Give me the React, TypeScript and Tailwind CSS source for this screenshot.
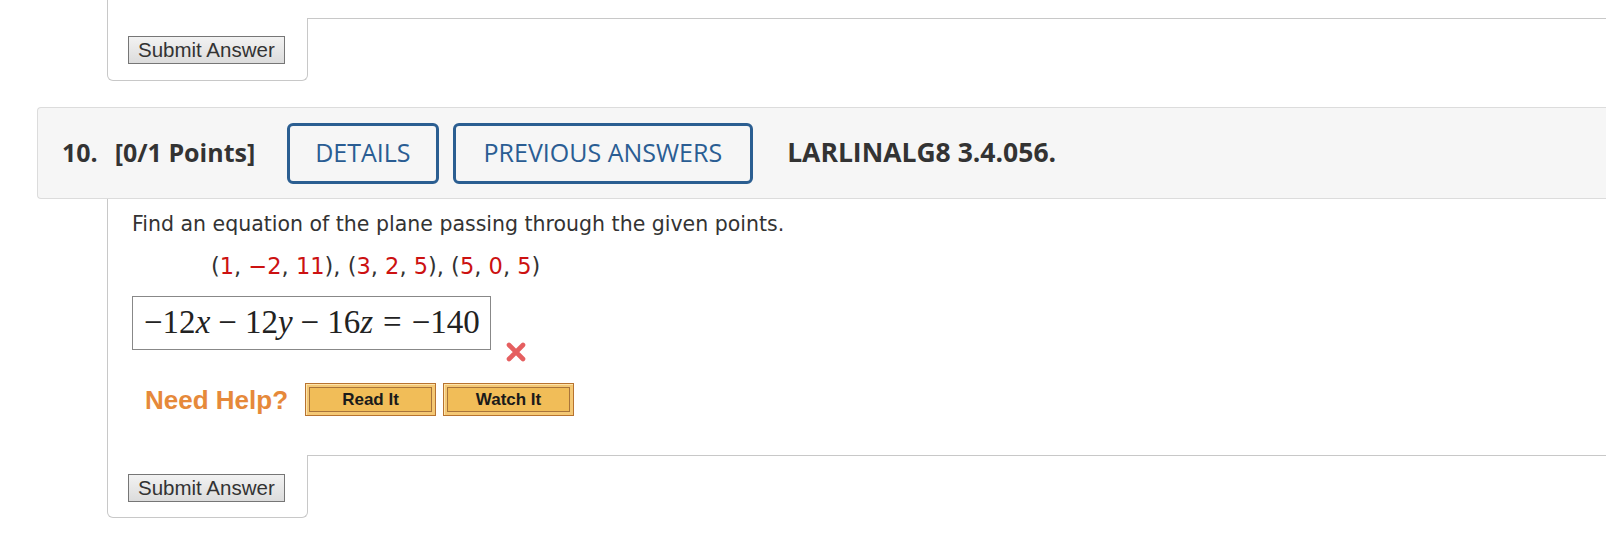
const sans = { fontFamily: '"Liberation Sans", Arial, sans-serif' };

function SubmitButton() {
  return (
    <button
      type="button"
      className="h-[28px] border border-[#767676] bg-[linear-gradient(#f2f2f2,#dcdcdc)] px-[9px] text-[20.5px] leading-[26px] text-[#333]"
      style={sans}
    >
      Submit Answer
    </button>
  );
}

function HelpButton({ label }: { label: string }) {
  return (
    <div className="h-[33px] w-[131px] border border-[#b8732f] bg-[#f4c875] p-[3px] shadow-[inset_1px_1px_0_#fde3ab]">
      <div
        className="flex h-full items-center justify-center border border-[#a8743a] bg-[#f1bd58] text-[17px] font-bold leading-none text-[#1a1a1a]"
        style={sans}
      >
        {label}
      </div>
    </div>
  );
}

function WrongMark() {
  return (
    <svg width="20" height="20" viewBox="0 0 20 20" className="mt-[46px] ml-[15px]">
      <path d="M3 3 L17 17 M17 3 L3 17" stroke="#e55f60" strokeWidth="4.6" strokeLinecap="round" />
    </svg>
  );
}

const pt = (v: string) => <span className="text-[#cc1111]">{v}</span>;

export default function App() {
  const open = { fontFamily: '"Open Sans", "Noto Sans", sans-serif' };
  return (
    <div className="h-[543px] w-[1606px] overflow-hidden bg-white">
      {/* previous question tab */}
      <div className="flex pl-[107px]">
        <div className="h-[81px] w-[201px] shrink-0 rounded-b-[6px] border-x border-b border-[#c8c8c8] pl-[20px] pt-[36px]">
          <SubmitButton />
        </div>
        <div className="-ml-px flex flex-1 flex-col">
          <div className="h-[18px] bg-white" />
          <div className="border-t border-[#c8c8c8]" />
        </div>
      </div>

      {/* question header */}
      <div
        className="ml-[37px] mt-[26px] flex h-[92px] items-center rounded-l-[4px] border border-r-0 border-[#dcdcdc] bg-[#f6f6f6] pl-[24px] text-[#333]"
        style={open}
      >
        <span className="text-[25px] font-bold">10.</span>
        <span className="ml-[17px] text-[25px] font-bold">[0/1 Points]</span>
        <button
          type="button"
          className="ml-[32px] h-[61px] rounded-[6px] border-[3px] border-[#2b5e91] px-[25px] text-[25px] text-[#2a5d93]"
        >
          DETAILS
        </button>
        <button
          type="button"
          className="ml-[14px] h-[61px] rounded-[6px] border-[3px] border-[#2b5e91] px-[28px] text-[25px] text-[#2a5d93]"
        >
          PREVIOUS ANSWERS
        </button>
        <span className="ml-[34px] text-[26.5px] font-bold">LARLINALG8 3.4.056.</span>
      </div>

      {/* question body */}
      <div className="ml-[107px] h-[256px] border-l border-[#c8c8c8] pl-[24px]">
        <p
          className="pt-[13px] text-[20.5px] leading-[24px] text-[#333]"
          style={{ fontFamily: '"DejaVu Sans", Verdana, sans-serif' }}
        >
          Find an equation of the plane passing through the given points.
        </p>
        <p
          className="ml-[79px] mt-[17px] text-[22.5px] leading-[26px] text-[#333]"
          style={{ fontFamily: '"DejaVu Sans", Verdana, sans-serif' }}
        >
          ({pt('1')}, {pt('−2')}, {pt('11')}), ({pt('3')}, {pt('2')}, {pt('5')}), ({pt('5')}, {pt('0')}, {pt('5')})
        </p>
        <div className="mt-[17px] flex items-start">
          <div
            className="flex h-[54px] w-[359px] items-center border border-[#888] pl-[11px] text-[33px] text-[#222]"
            style={{ fontFamily: '"Liberation Serif", "Times New Roman", serif' }}
          >
            <span>−12</span>
            <i>x</i>
            <span className="mx-[8px]">−</span>
            <span>12</span>
            <i>y</i>
            <span className="mx-[8px]">−</span>
            <span>16</span>
            <i>z</i>
            <span className="mx-[10px]">=</span>
            <span>−140</span>
          </div>
          <WrongMark />
        </div>
        <div className="mt-[21px] flex items-center pl-[13px]">
          <span className="text-[26px] font-bold leading-none text-[#e6893a]" style={sans}>
            Need Help?
          </span>
          <div className="ml-[17px] flex gap-[7px]">
            <HelpButton label="Read It" />
            <HelpButton label="Watch It" />
          </div>
        </div>
      </div>

      {/* submit tab */}
      <div className="flex pl-[107px]">
        <div className="w-[201px] shrink-0 rounded-b-[6px] border-x border-b border-[#c8c8c8] pb-[15px] pl-[20px] pt-[19px]">
          <SubmitButton />
        </div>
        <div className="-ml-px flex-1 border-t border-[#c8c8c8]" />
      </div>
    </div>
  );
}
